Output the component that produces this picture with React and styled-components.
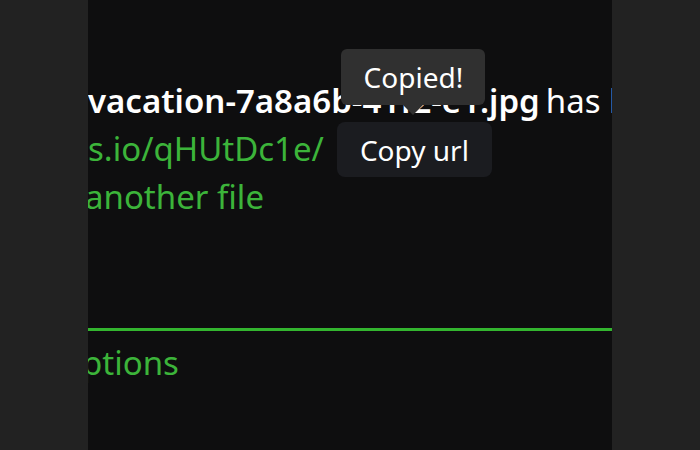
import React from 'react';
import styled, { createGlobalStyle } from 'styled-components';

const GlobalStyle = createGlobalStyle`
  html, body {
    margin: 0;
    padding: 0;
    background: #222222;
  }
  body {
    font-family: "Noto Sans", "Open Sans", sans-serif;
  }
`;

const Page = styled.div`
  display: grid;
  grid-template-columns: 88px 524px 88px;
  height: 450px;
  overflow: hidden;
`;

const Side = styled.div`
  background: #222222;
`;

const Main = styled.main`
  background: #0e0e0f;
  overflow: hidden;
  padding-top: 76px;
  display: flex;
  flex-direction: column;
`;

const Line = styled.div`
  display: flex;
  align-items: center;
  white-space: nowrap;
  height: 48px;
  font-size: 33px;
  color: ${p => (p.$green ? '#3cb43a' : '#ffffff')};
  margin-left: ${p => -(p.$shift || 0)}px;
`;

const FileName = styled.b`
  font-weight: 600;
  margin-right: 6px;
`;

const Link = styled.a`
  color: #3cb43a;
  text-decoration: none;
`;

const CopyWrap = styled.div`
  position: relative;
  margin-left: 13px;
  margin-top: 3px;
`;

const CopyButton = styled.button`
  font-family: inherit;
  font-size: 28px;
  color: #ffffff;
  background: #1b1c20;
  border: none;
  border-radius: 8px;
  height: 55px;
  width: 155px;
  padding: 0;
  cursor: pointer;
`;

const Tooltip = styled.div`
  position: absolute;
  left: 50%;
  bottom: calc(100% + 17px);
  transform: translateX(calc(-50% - 1px));
  width: 144px;
  height: 56px;
  background: #303030;
  border-radius: 6px;
  color: #ffffff;
  font-size: 28px;
  display: flex;
  align-items: center;
  justify-content: center;

  &::after {
    content: '';
    position: absolute;
    top: 100%;
    left: 50%;
    transform: translateX(-50%);
    border: 10px solid transparent;
    border-top-color: #303030;
    border-bottom: none;
  }
`;

const Divider = styled.hr`
  border: none;
  height: 3px;
  background: #33b52f;
  margin: 108px 0 0;
`;

const Options = styled.div`
  font-size: 33px;
  color: #3cb43a;
  margin-top: 9px;
  margin-left: -26px;
  white-space: nowrap;
`;

export default function App() {
  return (
    <>
      <GlobalStyle />
      <Page>
        <Side />
        <Main>
          <Line>
            <FileName>vacation-7a8a6b-41f2-e1.jpg</FileName>
            has been uploaded
          </Line>
          <Line $green>
            <Link href="#">s.io/qHUtDc1e/</Link>
            <CopyWrap>
              <Tooltip>Copied!</Tooltip>
              <CopyButton>Copy url</CopyButton>
            </CopyWrap>
          </Line>
          <Line $green $shift={3}>
            another file
          </Line>
          <Divider />
          <Options>options</Options>
        </Main>
        <Side />
      </Page>
    </>
  );
}
